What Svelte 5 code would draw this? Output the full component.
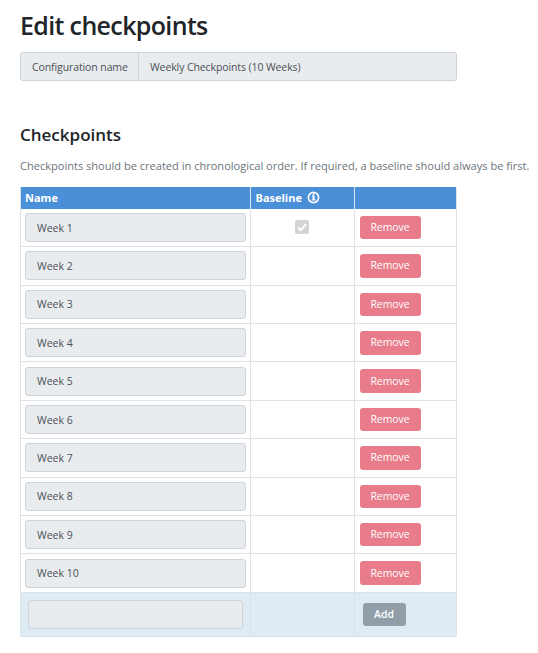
<script>
  const weeks = Array.from({ length: 10 }, (_, i) => `Week ${i + 1}`);
</script>

<main class="page">
  <h1>Edit checkpoints</h1>
  <div class="group">
    <span class="label">Configuration name</span>
    <span class="value">Weekly Checkpoints (10 Weeks)</span>
  </div>

  <h2>Checkpoints</h2>
  <p>Checkpoints should be created in chronological order. If required, a baseline should always be first.</p>

  <div class="table">
    <div class="row head">
      <div class="cell">Name</div>
      <div class="cell">
        Baseline
        <svg class="info" viewBox="0 0 16 16" aria-hidden="true">
          <circle cx="8" cy="8" r="6.3" fill="none" stroke="#fff" stroke-width="2" />
          <path d="M6 5.6h3.4v4.4h1v1.6H5.7V10h1.2V7.2H6z M6.9 3.4h2.5v1.5H6.9z" fill="#fff" />
        </svg>
      </div>
      <div class="cell"></div>
    </div>
    {#each weeks as week, i}
      <div class="row item">
        <div class="cell"><div class="input">{week}</div></div>
        <div class="cell center">
          {#if i === 0}
            <span class="check">
              <svg viewBox="0 0 14 14" aria-hidden="true">
                <path d="M3 7.4l2.7 2.8L11 4.2" fill="none" stroke="#fff" stroke-width="2" />
              </svg>
            </span>
          {/if}
        </div>
        <div class="cell"><button class="remove">Remove</button></div>
      </div>
    {/each}
    <div class="row add">
      <div class="cell"><div class="input blank"></div></div>
      <div class="cell"></div>
      <div class="cell"><button class="addbtn">Add</button></div>
    </div>
  </div>
</main>

<style>
  :global(body) {
    margin: 0;
    background: #fff;
    font-family: "Open Sans", "Noto Sans", sans-serif;
    color: #212529;
  }
  .page {
    padding: 8px 0 0 20px;
    width: 437px;
  }
  h1 {
    margin: 0;
    font-size: 25px;
    font-weight: 600;
    line-height: 34px;
    letter-spacing: -0.65px;
    color: #212529;
    white-space: nowrap;
  }
  .group {
    display: flex;
    height: 29px;
    margin-top: 10px;
    border: 1px solid #ced4da;
    border-radius: 3px;
    background: #e9ecef;
    font-size: 10.5px;
    letter-spacing: -0.1px;
    color: #495057;
    box-sizing: border-box;
  }
  .label {
    display: flex;
    align-items: center;
    padding: 0 11px;
    width: 118px;
    box-sizing: border-box;
    border-right: 1px solid #ced4da;
    white-space: nowrap;
  }
  .value {
    display: flex;
    align-items: center;
    padding: 1px 11px 0;
    white-space: nowrap;
  }
  h2 {
    margin: 43px 0 0;
    font-size: 17px;
    font-weight: 600;
    line-height: 22px;
    color: #212529;
  }
  p {
    margin: 11px 0 0;
    font-size: 11.06px;
    line-height: 18px;
    color: #6c757d;
    white-space: nowrap;
  }
  .table {
    margin-top: 12px;
    width: 437px;
    font-size: 10.5px;
  }
  .row {
    display: grid;
    grid-template-columns: 229.5px 104px 102.5px;
    box-sizing: border-box;
    border-left: 1px solid #dee2e6;
    border-right: 1px solid #dee2e6;
    border-bottom: 1px solid #dee2e6;
  }
  .cell {
    display: flex;
    align-items: center;
    border-right: 1px solid #dee2e6;
    box-sizing: border-box;
    min-width: 0;
  }
  .cell:last-child {
    border-right: 0;
  }
  .head {
    height: 21.9px;
    background: #4a90d9;
    color: #fff;
    font-weight: 700;
    font-size: 11px;
    border-color: #d6e4f0;
    border-bottom: 0;
  }
  .head .cell {
    padding-left: 4px;
    border-color: #dbe6f0;
  }
  .head .cell:nth-child(2) {
    padding-left: 5px;
  }
  .info {
    width: 13px;
    height: 13px;
    margin-left: 5px;
  }
  .item {
    height: 38.4px;
  }
  .item .cell {
    padding-left: 4px;
  }
  .item .cell:last-child {
    padding-left: 5px;
  }
  .item .center {
    justify-content: center;
    padding: 0 0 2px 0;
  }
  .input {
    width: 100%;
    height: 29px;
    margin-right: 4px;
    display: flex;
    align-items: center;
    padding-left: 11px;
    box-sizing: border-box;
    border: 1px solid #ced4da;
    border-radius: 3px;
    background: #e9ecef;
    color: #495057;
    font-size: 10.5px;
  }
  .check {
    width: 14px;
    height: 14px;
    border-radius: 2px;
    background: #d4d4d4;
    display: flex;
  }
  .remove {
    width: 61px;
    height: 23.5px;
    padding: 0 0 1px;
    border: 0;
    border-radius: 3px;
    background: #e87c8a;
    color: #fff;
    font: 10.4px "Open Sans", "Noto Sans", sans-serif;
  }
  .add {
    height: 44.1px;
    background: #deebf5;
    border-color: #d9e3ea;
  }
  .add .cell {
    border-color: #d9e3ea;
  }
  .add .input {
    margin: 0 7px 0 7px;
  }
  .add .cell:last-child {
    padding-left: 8px;
  }
  .addbtn {
    width: 43px;
    height: 23px;
    padding: 0 0 1px;
    border: 0;
    border-radius: 3px;
    background: #929ea7;
    color: #fff;
    font: 600 10.4px "Open Sans", "Noto Sans", sans-serif;
  }
</style>
